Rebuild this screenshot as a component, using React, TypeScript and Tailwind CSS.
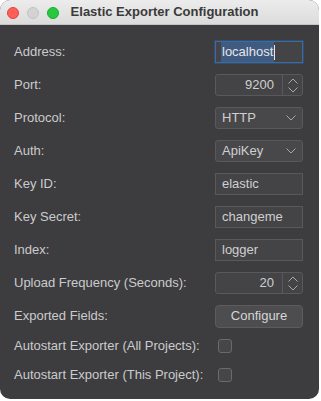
import React from "react";

const font = { fontFamily: '"Liberation Sans", Arial, sans-serif' };

function Chevron() {
  return (
    <svg width="10" height="6" viewBox="0 0 10 6" className="text-[#a8a8aa]">
      <path d="M0.5 0.5 L5 5 L9.5 0.5" fill="none" stroke="currentColor" strokeWidth="1" />
    </svg>
  );
}

function Stepper() {
  return (
    <div className="flex w-[20px] flex-col items-center justify-center gap-[3px] border-l border-[#59595b] text-[#a8a8aa]">
      <svg width="10" height="6" viewBox="0 0 10 6">
        <path d="M0.5 5.5 L5 1 L9.5 5.5" fill="none" stroke="currentColor" strokeWidth="1" />
      </svg>
      <svg width="10" height="6" viewBox="0 0 10 6">
        <path d="M0.5 0.5 L5 5 L9.5 0.5" fill="none" stroke="currentColor" strokeWidth="1" />
      </svg>
    </div>
  );
}

function Row({ label, children }: { label: string; children: React.ReactNode }) {
  return (
    <div className="flex h-[22px] items-center">
      <span className="w-[201px] text-[13px] text-[#cbcbcd]">{label}</span>
      {children}
    </div>
  );
}

function TextField({ value }: { value: string }) {
  return (
    <div className="flex h-[22px] w-[88px] items-center border border-[#59595b] bg-[#444446] px-[6px] text-[13px] text-[#cfcfd1]">
      {value}
    </div>
  );
}

function NumberField({ value }: { value: string }) {
  return (
    <div className="flex h-[22px] w-[88px] rounded-[3px] border border-[#59595b] bg-[#444446] text-[13px] text-[#cfcfd1]">
      <div className="flex flex-1 items-center justify-end pr-[8px]">{value}</div>
      <Stepper />
    </div>
  );
}

function Select({ value }: { value: string }) {
  return (
    <div className="flex h-[22px] w-[88px] items-center justify-between rounded-[3px] border border-[#59595b] bg-[#48484a] pl-[6px] pr-[6px] text-[13px] text-[#cfcfd1]">
      <span>{value}</span>
      <Chevron />
    </div>
  );
}

function Checkbox() {
  return <div className="ml-[3px] h-[14px] w-[14px] rounded-[3px] border border-[#6a6a6c] bg-[#464648]" />;
}

export default function App() {
  return (
    <div className="h-[401px] w-[321px] bg-white" style={font}>
      <div className="flex h-[399px] w-[319px] flex-col overflow-hidden rounded-[10px] bg-[#3d3d3f]">
        <div className="relative flex h-[25px] items-center justify-center border-b border-[#c4c4c4] bg-gradient-to-b from-[#ececec] to-[#dcdcdc]">
          <div className="absolute left-[7px] top-[7px] flex gap-[8px]">
            <div className="h-[12px] w-[12px] rounded-full border border-[#e0443e] bg-[#fe5f57]" />
            <div className="h-[12px] w-[12px] rounded-full border border-[#c2c2c2] bg-[#d3d3d3]" />
            <div className="h-[12px] w-[12px] rounded-full border border-[#1aab29] bg-[#28c840]" />
          </div>
          <span className="pl-[10px] text-[13px] font-bold text-[#3a3a3a]">Elastic Exporter Configuration</span>
        </div>

        <div className="flex flex-col pl-[14px] pt-[16px]">
          <div className="flex flex-col gap-[11px]">
            <Row label="Address:">
              <div className="flex h-[22px] w-[88px] items-center border border-[#3f6a99] bg-[#444446] px-[5px] text-[13px] text-[#e6e6e8] shadow-[0_0_0_1px_#2f4f74]">
                <span className="bg-[#3f5b82] px-[1px]">localhost</span>
                <span className="h-[15px] w-[1px] bg-[#e6e6e8]" />
              </div>
            </Row>
            <Row label="Port:">
              <NumberField value="9200" />
            </Row>
            <Row label="Protocol:">
              <Select value="HTTP" />
            </Row>
            <Row label="Auth:">
              <Select value="ApiKey" />
            </Row>
            <Row label="Key ID:">
              <TextField value="elastic" />
            </Row>
            <Row label="Key Secret:">
              <TextField value="changeme" />
            </Row>
            <Row label="Index:">
              <TextField value="logger" />
            </Row>
            <Row label="Upload Frequency (Seconds):">
              <NumberField value="20" />
            </Row>
            <Row label="Exported Fields:">
              <div className="flex h-[23px] w-[88px] items-center justify-center rounded-[4px] border border-[#5c5c5e] bg-[#4d4d4f] text-[13px] text-[#d6d6d8]">
                Configure
              </div>
            </Row>
          </div>

          <div className="mt-[12px] flex flex-col gap-[15px]">
            <div className="flex h-[14px] items-center">
              <span className="w-[201px] text-[13px] text-[#cbcbcd]">Autostart Exporter (All Projects):</span>
              <Checkbox />
            </div>
            <div className="flex h-[14px] items-center">
              <span className="w-[201px] text-[13px] text-[#cbcbcd]">Autostart Exporter (This Project):</span>
              <Checkbox />
            </div>
          </div>
        </div>
      </div>
    </div>
  );
}
